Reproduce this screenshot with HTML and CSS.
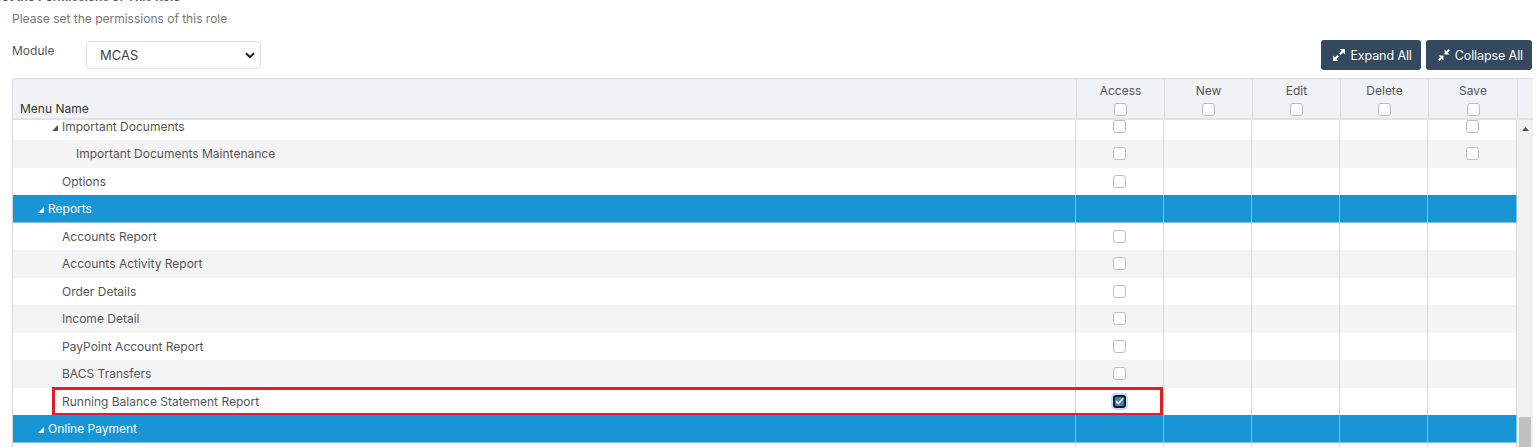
FILE: index.html
```html
<!DOCTYPE html>
<html lang="en">
<head>
<meta charset="utf-8">
<title>Role Permissions</title>
<link rel="stylesheet" href="styles.css">
</head>
<body>
<div class="page">
  <div class="cut"><span>Set the Permissions of This Role</span></div>
  <p class="intro">Please set the permissions of this role</p>

  <div class="toolbar">
    <label class="mod-label" for="module">Module</label>
    <div class="select-wrap">
      <select id="module" class="select"><option>MCAS</option></select>
      <svg class="chev" width="10" height="7" viewBox="0 0 10 7"><path d="M1 1.2l4 4 4-4" fill="none" stroke="#222" stroke-width="2"/></svg>
    </div>
    <div class="spacer"></div>
    <button class="btn">
      <svg width="12" height="12" viewBox="0 0 12 12"><path fill="#fff" d="M6.6 0h5.4v5.4l-1.9-1.9-2.5 2.5-1.5-1.5 2.5-2.5z"/><path fill="#fff" d="M5.4 12H0V6.6l1.9 1.9 2.5-2.5 1.5 1.5-2.5 2.5z"/></svg>
      Expand All
    </button>
    <button class="btn">
      <svg width="12" height="12" viewBox="0 0 12 12"><path fill="#fff" d="M6.6 5.4V0.6l1.7 1.7L10.5 0.1 11.9 1.5 9.7 3.7l1.7 1.7z"/><path fill="#fff" d="M5.4 6.6v4.8l-1.7-1.7-2.2 2.2-1.4-1.4 2.2-2.2L0.6 6.6z"/></svg>
      Collapse All
    </button>
  </div>

  <div class="table">
    <div class="thead">
      <div class="th th-name">Menu Name</div>
      <div class="th"><span>Access</span><span class="cb"></span></div>
      <div class="th"><span>New</span><span class="cb"></span></div>
      <div class="th"><span>Edit</span><span class="cb"></span></div>
      <div class="th"><span>Delete</span><span class="cb"></span></div>
      <div class="th"><span>Save</span><span class="cb"></span></div>
      <div class="th th-sb"></div>
    </div>
    <div class="tbody">
      <div class="viewport">
        <div class="rows">
          <div class="row">
            <div class="td name lvl1"><svg class="tri" width="6" height="6" viewBox="0 0 6 6"><polygon points="6,0 6,6 0,6"/></svg>Important Documents</div>
            <div class="td"><span class="cb"></span></div><div class="td"></div><div class="td"></div><div class="td"></div><div class="td"><span class="cb"></span></div>
          </div>
          <div class="row alt">
            <div class="td name lvl2">Important Documents Maintenance</div>
            <div class="td"><span class="cb"></span></div><div class="td"></div><div class="td"></div><div class="td"></div><div class="td"><span class="cb"></span></div>
          </div>
          <div class="row">
            <div class="td name lvl1">Options</div>
            <div class="td"><span class="cb"></span></div><div class="td"></div><div class="td"></div><div class="td"></div><div class="td"></div>
          </div>
          <div class="row group">
            <div class="td name lvl0"><svg class="tri" width="6" height="6" viewBox="0 0 6 6"><polygon points="6,0 6,6 0,6"/></svg>Reports</div>
            <div class="td"></div><div class="td"></div><div class="td"></div><div class="td"></div><div class="td"></div>
          </div>
          <div class="row">
            <div class="td name lvl1">Accounts Report</div>
            <div class="td"><span class="cb"></span></div><div class="td"></div><div class="td"></div><div class="td"></div><div class="td"></div>
          </div>
          <div class="row alt">
            <div class="td name lvl1">Accounts Activity Report</div>
            <div class="td"><span class="cb"></span></div><div class="td"></div><div class="td"></div><div class="td"></div><div class="td"></div>
          </div>
          <div class="row">
            <div class="td name lvl1">Order Details</div>
            <div class="td"><span class="cb"></span></div><div class="td"></div><div class="td"></div><div class="td"></div><div class="td"></div>
          </div>
          <div class="row alt">
            <div class="td name lvl1">Income Detail</div>
            <div class="td"><span class="cb"></span></div><div class="td"></div><div class="td"></div><div class="td"></div><div class="td"></div>
          </div>
          <div class="row">
            <div class="td name lvl1">PayPoint Account Report</div>
            <div class="td"><span class="cb"></span></div><div class="td"></div><div class="td"></div><div class="td"></div><div class="td"></div>
          </div>
          <div class="row alt">
            <div class="td name lvl1">BACS Transfers</div>
            <div class="td"><span class="cb"></span></div><div class="td"></div><div class="td"></div><div class="td"></div><div class="td"></div>
          </div>
          <div class="row highlight-row">
            <div class="td name lvl1">Running Balance Statement Report</div>
            <div class="td"><span class="cb checked"><svg width="9" height="8" viewBox="0 0 9 8"><path d="M1 4.2l2.3 2.3L8 1.3" fill="none" stroke="#fff" stroke-width="1.8"/></svg></span></div><div class="td"></div><div class="td"></div><div class="td"></div><div class="td"></div>
            <div class="mark"></div>
          </div>
          <div class="row group">
            <div class="td name lvl0"><svg class="tri" width="6" height="6" viewBox="0 0 6 6"><polygon points="6,0 6,6 0,6"/></svg>Online Payment</div>
            <div class="td"></div><div class="td"></div><div class="td"></div><div class="td"></div><div class="td"></div>
          </div>
          <div class="row">
            <div class="td name lvl1"></div>
            <div class="td"></div><div class="td"></div><div class="td"></div><div class="td"></div><div class="td"></div>
          </div>
        </div>
      </div>
      <div class="scrollbar">
        <svg class="sb-arrow" width="7" height="4" viewBox="0 0 7 4"><polygon points="3.5,0 7,4 0,4" fill="#505050"/></svg>
        <div class="sb-track"></div>
        <div class="sb-thumb"></div>
      </div>
    </div>
  </div>
</div>
</body>
</html>
```

FILE: styles.css
```css
* { box-sizing: border-box; }
html, body {
  margin: 0;
  padding: 0;
  background: #fff;
  height: 447px;
  overflow: hidden;
}
body {
  font-family: Inter, "Noto Sans", "Liberation Sans", sans-serif;
  font-size: 12px;
  color: #555;
}
.page {
  display: flex;
  flex-direction: column;
}
.cut {
  height: 3px;
  overflow: hidden;
  display: flex;
  align-items: flex-end;
  font-size: 12px;
  line-height: 12px;
  font-weight: 600;
  color: #555;
}
.cut span { margin-left: -6px; }
.intro {
  margin: 9px 0 0 12px;
  line-height: 14px;
  color: #777;
}
.toolbar {
  display: flex;
  align-items: flex-start;
  margin-top: 14px;
  padding: 0 4px 0 12px;
  height: 30px;
}
.mod-label {
  width: 74px;
  padding-top: 4px;
  line-height: 14px;
  color: #555;
}
.select-wrap {
  position: relative;
  margin-top: 1px;
  width: 175px;
  height: 28px;
}
.select {
  appearance: none;
  -webkit-appearance: none;
  width: 100%;
  height: 100%;
  border: 1px solid #e2e2e2;
  border-radius: 4px;
  background: #fff;
  padding: 0 0 0 13px;
  font-family: inherit;
  font-size: 13px;
  color: #444;
}
.chev {
  position: absolute;
  right: 6px;
  top: 11px;
  pointer-events: none;
}
.spacer { flex: 1; }
.btn {
  display: flex;
  align-items: center;
  gap: 5px;
  height: 30px;
  margin-left: 5px;
  padding: 0 9px 0 12px;
  border: none;
  border-radius: 3px;
  background: #34495e;
  color: #fff;
  font-family: inherit;
  font-size: 12.5px;
  letter-spacing: -0.1px;
}
.table {
  margin-top: 8px;
  margin-left: 12px;
  width: 1521px;
}
.thead {
  display: grid;
  grid-template-columns: 1064px 88px 88px 88px 88px 89px 16px;
  height: 42px;
  background: #eff3f8;
  border-top: 1px solid #dcdcdc;
  border-left: 1px solid #dcdcdc;
  border-bottom: 2px solid #e2e2e2;
  border-top-left-radius: 4px;
}
.th {
  display: flex;
  flex-direction: column;
  align-items: center;
  padding-top: 5px;
  gap: 5px;
  line-height: 14px;
  color: #555;
  border-right: 1px solid #dcdcdc;
}
.th-name {
  align-items: flex-start;
  justify-content: flex-end;
  padding: 0 0 2px 7px;
  color: #333;
}
.th-sb { border-right: none; }
.tbody {
  display: flex;
  height: 330px;
}
.viewport {
  width: 1505px;
  overflow: hidden;
}
.rows {
  margin-top: -7.5px;
}
.row {
  position: relative;
  display: grid;
  grid-template-columns: 1064px 88px 88px 88px 88px 89px;
  height: 27.5px;
  background: #fff;
}
.row.alt { background: #f4f4f4; }
.row.group {
  background: #1795d4;
  color: #fff;
  box-shadow: inset 0 -1px 0 #7cc0e6;
}
.td {
  display: flex;
  align-items: center;
  justify-content: center;
  border-right: 1px solid #d8d8d8;
}
.row.group .td { border-right-color: rgba(255, 255, 255, 0.45); }
.td.name {
  justify-content: flex-start;
  border-left: 1px solid #d8d8d8;
}
.row.group .td.name { border-left-color: #d8d8d8; }
.lvl0 { padding-left: 35px; }
.lvl1 { padding-left: 49px; }
.lvl2 { padding-left: 63px; }
.tri {
  width: 6px;
  height: 6px;
  margin-left: -10px;
  margin-right: 4px;
  margin-top: 3px;
  fill: #555;
}
.row.group .tri { fill: #fff; }
.cb {
  display: inline-block;
  width: 13px;
  height: 13px;
  border: 1px solid #bdbdbd;
  border-radius: 3px;
  background: #fff;
}
.cb.checked {
  display: inline-flex;
  align-items: center;
  justify-content: center;
  border: 2px solid #1d1d1d;
  background: #2f7fd6;
  box-shadow: 0 0 0 2px #c9ddf4;
}
.mark {
  position: absolute;
  left: 40px;
  top: -1px;
  width: 1111px;
  height: 29px;
  border: 3px solid #e41e26;
  pointer-events: none;
}
.scrollbar {
  width: 16px;
  background: #f1f1f1;
  display: flex;
  flex-direction: column;
  align-items: center;
}
.sb-arrow { margin-top: 7px; }
.sb-track { height: 286px; }
.sb-thumb {
  width: 12px;
  flex: 1;
  background: #c1c1c1;
}
```
